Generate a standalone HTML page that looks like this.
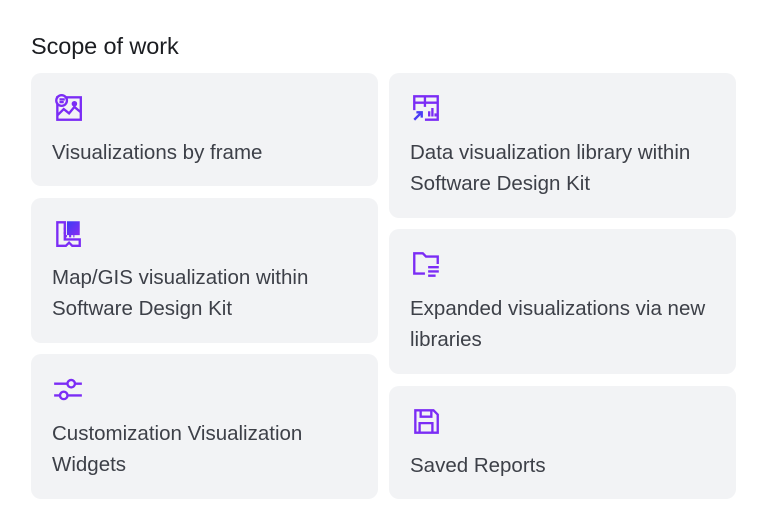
<!DOCTYPE html>
<html><head><meta charset="utf-8"><style>
*{margin:0;padding:0;box-sizing:border-box}
body{width:768px;height:532px;background:#fff;font-family:"Liberation Sans",sans-serif;position:relative;overflow:hidden}
h1{position:absolute;left:31px;top:33px;font-size:23.5px;font-weight:400;color:#1b1d21;letter-spacing:-0.1px}
.c{position:absolute;background:#f2f3f5;border-radius:10px;padding:19px 21px}
.c svg{display:block;width:32px;height:32px;margin-bottom:13px}
.c p{font-size:20.5px;line-height:31px;color:#3d4048;letter-spacing:0}
</style></head><body>
<svg width="0" height="0" style="position:absolute"><defs><linearGradient id="g2" x1="0" y1="0" x2="1" y2="1"><stop offset="0" stop-color="#3a3df5"/><stop offset="1" stop-color="#8a2bf2"/></linearGradient></defs></svg>
<h1>Scope of work</h1>

<div class="c" style="left:31px;top:73px;width:347px;height:113px">
<svg viewBox="0 0 30 30" fill="none" stroke="#7b2cf5" stroke-width="2.2"><rect x="5" y="5" width="22" height="21"/><path d="M5 22l6-6 5 4 5-6 6 5"/><circle cx="21" cy="11" r="1.5" fill="#7b2cf5"/><circle cx="9" cy="8" r="5" fill="#f2f3f5"/><path d="M7 7h5M7 9.5h4"/></svg>
<p>Visualizations by frame</p></div>

<div class="c" style="left:31px;top:198px;width:347px;height:145px">
<svg viewBox="0 0 30 30" fill="none" stroke="#7b2cf5" stroke-width="2.2"><path d="M5 5h7v16h14v6h-7l-3-3-3 3H5z"/><rect x="14" y="4" width="12" height="13" fill="url(#g2)" stroke="none"/><path d="M12 10v8h9" stroke-dasharray="2 2"/></svg>
<p>Map/GIS visualization within Software Design Kit</p></div>

<div class="c" style="left:31px;top:354px;width:347px;height:145px">
<svg viewBox="0 0 30 30" fill="none" stroke="#7b2cf5" stroke-width="2.2"><path d="M2 10h12M22 10h6M2 21h5M15 21h13"/><circle cx="18" cy="10" r="3.5"/><circle cx="11" cy="21" r="3.5"/></svg>
<p>Customization Visualization Widgets</p></div>

<div class="c" style="left:389px;top:73px;width:347px;height:145px">
<svg viewBox="0 0 30 30" fill="none" stroke="#7b2cf5" stroke-width="2.2"><path d="M4 17V4h22v22H14M4 10h22M14 4v10"/><path d="M4 26l7-7M6 19h5v5" stroke="#4a3cf5"/><path d="M18 23v-5M21 23v-8M24 23v-3"/></svg>
<p>Data visualization library within Software Design Kit</p></div>

<div class="c" style="left:389px;top:229px;width:347px;height:145px">
<svg viewBox="0 0 30 30" fill="none" stroke="#7b2cf5" stroke-width="2.2"><path d="M14 24H4V5h8l3 3h11v7"/><path d="M17 18h10M17 22h10M17 26h7"/></svg>
<p>Expanded visualizations via new libraries</p></div>

<div class="c" style="left:389px;top:386px;width:347px;height:113px">
<svg viewBox="0 0 30 30" fill="none" stroke="#7b2cf5" stroke-width="2.2"><path d="M5 5h17l4 4v17H5z"/><path d="M10 5v6h10V5M9 26v-9h12v9"/></svg>
<p>Saved Reports</p></div>
</body></html>
